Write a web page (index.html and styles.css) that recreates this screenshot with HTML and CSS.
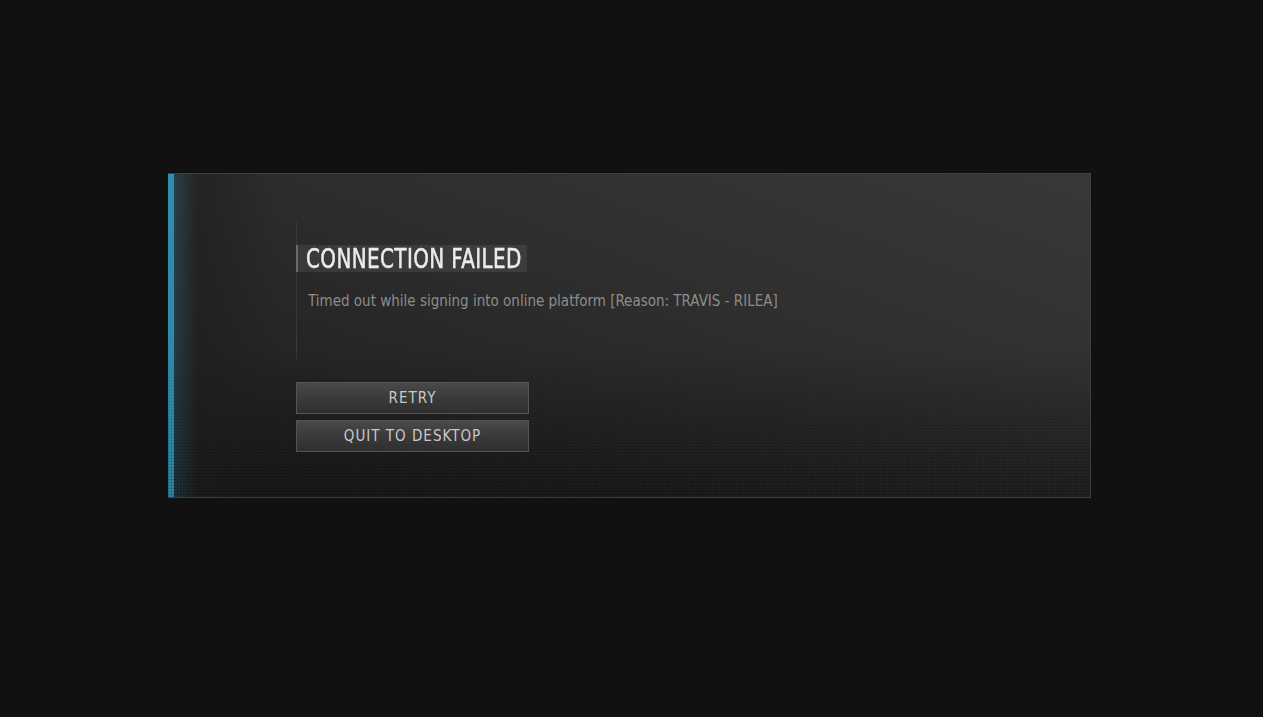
FILE: index.html
```html
<!DOCTYPE html>
<html lang="en">
<head>
    <meta charset="UTF-8">
    <meta name="viewport" content="width=device-width, initial-scale=1.0">
    <title>Connection Failed</title>
    <link rel="stylesheet" href="styles.css">
</head>
<body>
    <div class="screen">
        <div class="dialog">
            <div class="accent"></div>
            <div class="content">
                <div class="message">
                    <h1 class="title"><span class="title-text">CONNECTION FAILED</span></h1>
                    <p class="reason">Timed out while signing into online platform [Reason: TRAVIS - RILEA]</p>
                </div>
                <div class="actions">
                    <button class="btn">RETRY</button>
                    <button class="btn">QUIT TO DESKTOP</button>
                </div>
            </div>
        </div>
    </div>
</body>
</html>
```

FILE: styles.css
```css
html, body {
    margin: 0;
    padding: 0;
    height: 100%;
    background-color: #111111;
    font-family: "DejaVu Sans Condensed", "DejaVu Sans", sans-serif;
}
.screen {
    height: 717px;
    padding-top: 173px;
    padding-left: 168px;
    box-sizing: border-box;
}
.dialog {
    position: relative;
    display: flex;
    width: 923px;
    height: 325px;
    box-sizing: border-box;
    border: 1px solid #3f3f3f;
    border-left: none;
    background:
        linear-gradient(90deg, rgba(42, 120, 145, 0.35) 0, rgba(30, 30, 30, 0.6) 30px, rgba(30, 30, 30, 0) 110px),
        linear-gradient(180deg, rgba(0, 0, 0, 0) 55%, rgba(0, 0, 0, 0.25) 100%),
        linear-gradient(200deg, #383838 0%, #303030 35%, #242424 75%, #202020 100%);
    overflow: hidden;
}
.dialog::after {
    content: "";
    position: absolute;
    left: 0;
    right: 0;
    bottom: 0;
    height: 150px;
    background:
        repeating-linear-gradient(90deg, rgba(0, 0, 0, 0.16) 0 1px, rgba(0, 0, 0, 0) 1px 3px),
        repeating-linear-gradient(180deg, rgba(0, 0, 0, 0.16) 0 1px, rgba(0, 0, 0, 0) 1px 3px);
    -webkit-mask-image: linear-gradient(180deg, transparent, #000);
    mask-image: linear-gradient(180deg, transparent, #000);
    pointer-events: none;
}
.accent {
    width: 6px;
    flex: none;
    background: linear-gradient(180deg, #2f8fb0, #2a86a6);
}
.content {
    padding-left: 122px;
    padding-top: 48px;
    position: relative;
    z-index: 1;
}
.message {
    border-left: 1px solid #3a3a3a;
    height: 137px;
    box-sizing: border-box;
    padding-top: 23px;
}
.title {
    display: block;
    width: 231px;
    box-sizing: border-box;
    margin: 0 0 0 -1px;
    padding: 0 0 0 8px;
    height: 27px;
    line-height: 28px;
    font-size: 27px;
    font-weight: normal;
    color: #ececec;
    background: rgba(255, 255, 255, 0.08);
    border-left: 2px solid #6a6a6a;
    white-space: nowrap;
}
.title-text {
    display: inline-block;
    transform: scaleX(0.82);
    transform-origin: left center;
    letter-spacing: 0.5px;
    -webkit-text-stroke: 0.5px #ececec;
}
.reason {
    margin: 20px 0 0 11px;
    font-size: 15px;
    color: #8c8c8c;
}
.actions {
    display: flex;
    flex-direction: column;
    gap: 6px;
    margin-top: 23px;
}
.btn {
    width: 233px;
    height: 32px;
    padding: 0;
    font-family: inherit;
    font-size: 15px;
    letter-spacing: 1px;
    color: #c9c9c9;
    border: 1px solid #545454;
    background: linear-gradient(180deg, #4a4a4a 0%, #3a3a3a 50%, #2f2f2f 100%);
    cursor: pointer;
}
```
